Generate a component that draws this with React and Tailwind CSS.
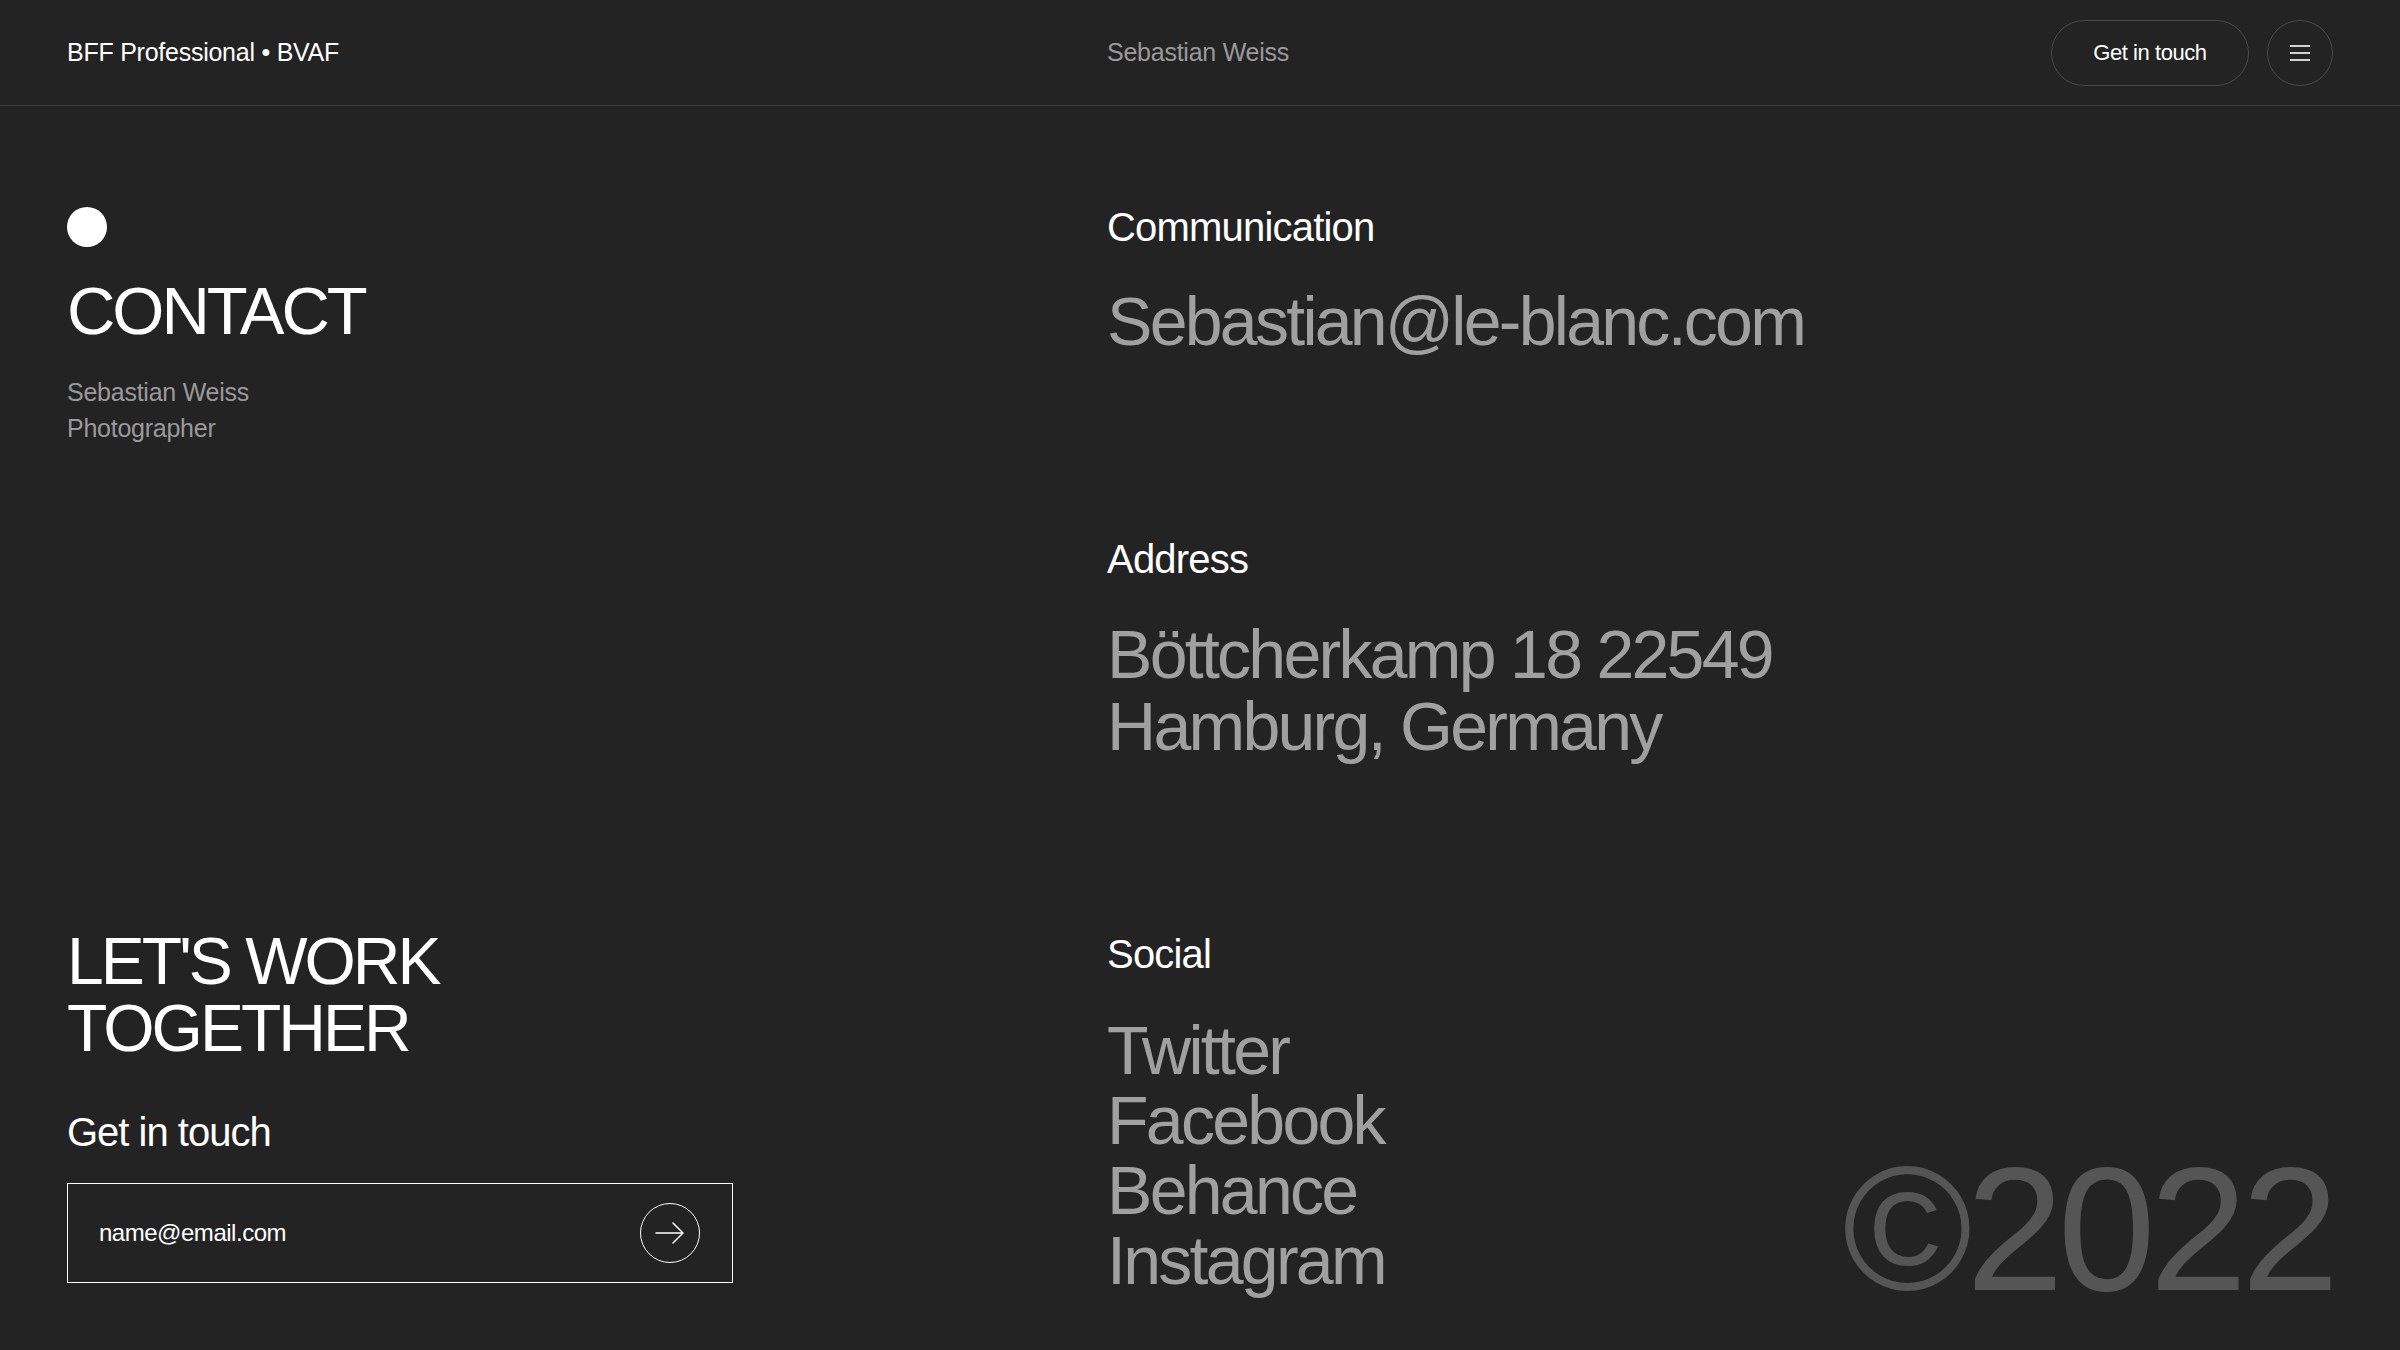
import React from "react";

// Contact page — dark, two columns, big grotesk type

const MenuIcon = () => (
  <svg width="20" height="16" viewBox="0 0 20 16" fill="none" stroke="white" strokeWidth="1.6">
    <line x1="0" y1="1" x2="20" y2="1" />
    <line x1="0" y1="8" x2="20" y2="8" />
    <line x1="0" y1="15" x2="20" y2="15" />
  </svg>
);

const ArrowIcon = () => (
  <svg width="30" height="22" viewBox="0 0 30 22" fill="none" stroke="white" strokeWidth="1.5" strokeLinecap="round" strokeLinejoin="round">
    <path d="M1 11h27M18 1l10 10-10 10" />
  </svg>
);

const Label = ({ children, className = "" }) => (
  <h3 className={`text-[40px] leading-[48px] tracking-[-0.02em] text-white ${className}`}>{children}</h3>
);

const App = () => {
  return (
    <div className="w-full h-[1350px] bg-[#232323] text-white font-['Liberation_Sans',Arial,sans-serif] flex flex-col overflow-hidden">
      {/* Top bar */}
      <header className="h-[106px] shrink-0 border-b border-[#3d3d3d] px-[67px] flex items-center">
        <div className="w-[1040px] shrink-0 text-[25px] tracking-[-0.01em]">BFF Professional • BVAF</div>
        <div className="text-[25px] tracking-[-0.01em] text-[#9a9a9a]">Sebastian Weiss</div>
        <div className="ml-auto flex items-center gap-[18px]">
          <button className="h-[66px] w-[198px] rounded-full border-[1.5px] border-[#4a4a4a] text-[22px] tracking-[-0.02em] text-white">
            Get in touch
          </button>
          <button className="h-[66px] w-[66px] rounded-full border-[1.5px] border-[#4a4a4a] flex items-center justify-center">
            <MenuIcon />
          </button>
        </div>
      </header>

      <main className="flex-1 min-h-0 flex px-[67px] pb-[67px]">
        {/* Left column */}
        <section className="w-[1040px] shrink-0 flex flex-col pt-[101px]">
          <div className="w-[40px] h-[40px] rounded-full bg-white" />
          <h1 className="mt-[30px] text-[67px] leading-[67px] tracking-[-0.045em]">CONTACT</h1>
          <div className="mt-[30px] text-[25px] leading-[36px] tracking-[-0.01em] text-[#9a9a9a]">
            <p>Sebastian Weiss</p>
            <p>Photographer</p>
          </div>

          <div className="mt-auto">
            <h2 className="text-[66px] leading-[67px] tracking-[-0.045em]">
              LET'S WORK
              <br />
              TOGETHER
            </h2>
            <p className="mt-[46px] text-[40px] leading-[48px] tracking-[-0.025em]">Get in touch</p>
            <div className="mt-[27px] w-[666px] h-[100px] border-[1.5px] border-white flex items-center pl-[31px] pr-[32px]">
              <input
                type="email"
                placeholder="name@email.com"
                className="flex-1 bg-transparent outline-none text-[24px] tracking-[-0.02em] text-white placeholder:text-white"
              />
              <span className="w-[60px] h-[60px] rounded-full border-[1.5px] border-white flex items-center justify-center">
                <ArrowIcon />
              </span>
            </div>
          </div>
        </section>

        {/* Right column */}
        <section className="flex-1 pt-[97px]">
          <Label>Communication</Label>
          <p className="mt-[34px] text-[68px] leading-[72px] tracking-[-0.04em] text-[#a0a0a0]">Sebastian@le-blanc.com</p>

          <Label className="mt-[178px]">Address</Label>
          <p className="mt-[35px] text-[68px] leading-[72px] tracking-[-0.04em] text-[#a0a0a0]">
            Böttcherkamp 18 22549
            <br />
            Hamburg, Germany
          </p>

          <Label className="mt-[168px]">Social</Label>
          <div className="mt-[37px] flex justify-between items-end">
            <ul className="text-[68px] leading-[70px] tracking-[-0.04em] text-[#a0a0a0]">
              <li>Twitter</li>
              <li>Facebook</li>
              <li>Behance</li>
              <li>Instagram</li>
            </ul>
            <div className="text-[176px] leading-none tracking-[-0.035em] text-[#555555] mb-[-22px]">©2022</div>
          </div>
        </section>
      </main>
    </div>
  );
};

export default App;
